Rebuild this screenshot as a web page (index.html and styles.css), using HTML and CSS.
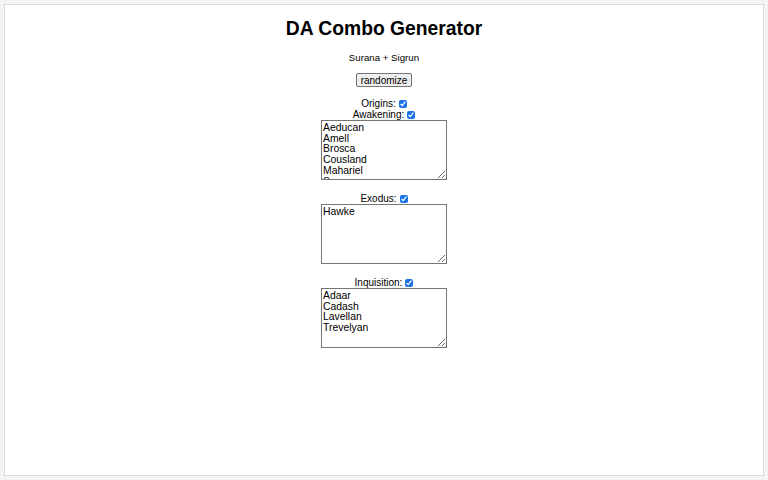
FILE: index.html
```html
<!DOCTYPE html>
<html>
<head>
<meta charset="utf-8">
<link rel="stylesheet" href="styles.css">
</head>
<body>
<div class="card">
  <h1 class="title">DA Combo Generator</h1>
  <p class="result">Surana + Sigrun</p>
  <button class="btn">randomize</button>
  <div class="group">
    <label class="lbl">Origins: <input type="checkbox" class="cb" checked></label>
    <label class="lbl">Awakening: <input type="checkbox" class="cb" checked></label>
    <textarea class="list">Aeducan
Amell
Brosca
Cousland
Mahariel
Surana
Tabris</textarea>
  </div>
  <div class="group">
    <label class="lbl">Exodus: <input type="checkbox" class="cb" checked></label>
    <textarea class="list">Hawke</textarea>
  </div>
  <div class="group">
    <label class="lbl">Inquisition: <input type="checkbox" class="cb" checked></label>
    <textarea class="list">Adaar
Cadash
Lavellan
Trevelyan</textarea>
  </div>
</div>
</body>
</html>
```
FILE: styles.css
```css
html, body {
  margin: 0;
  padding: 0;
}
body {
  background: #f4f4f4;
  padding: 4px;
  font-family: "Liberation Sans", Arial, sans-serif;
  font-size: 11px;
  color: #000;
}
.card {
  background: #fff;
  border: 1px solid #dcdcdc;
  height: 472px;
  box-sizing: border-box;
  display: flex;
  flex-direction: column;
  align-items: center;
}
.title {
  font-size: 19.3px;
  font-weight: bold;
  margin: 12px 0 0;
  line-height: 23px;
}
.result {
  margin: 12px 0 0;
  font-size: 9.7px;
  line-height: 12px;
}
.btn {
  margin-top: 9px;
  font-family: "Liberation Sans", Arial, sans-serif;
  font-size: 10px;
  padding: 0 4px;
  height: 14px;
  line-height: 11px;
  background: #efefef;
  border: 1px solid #767676;
  border-radius: 2px;
  color: #000;
}
.group {
  display: flex;
  flex-direction: column;
  align-items: center;
  margin-top: 11px;
}
.group + .group {
  margin-top: 13px;
}
.lbl {
  font-size: 10px;
  line-height: 11px;
  display: flex;
  align-items: center;
  gap: 3px;
}
.cb {
  width: 8px;
  height: 8px;
  margin: 0;
  accent-color: #1a73e8;
}
.list {
  width: 126px;
  height: 60px;
  box-sizing: border-box;
  margin: 0;
  padding: 2px 1px 1px;
  font-family: "Liberation Sans", Arial, sans-serif;
  font-size: 10.4px;
  line-height: 10.7px;
  border: 1px solid #767676;
  resize: vertical;
  overflow: hidden;
}
```
